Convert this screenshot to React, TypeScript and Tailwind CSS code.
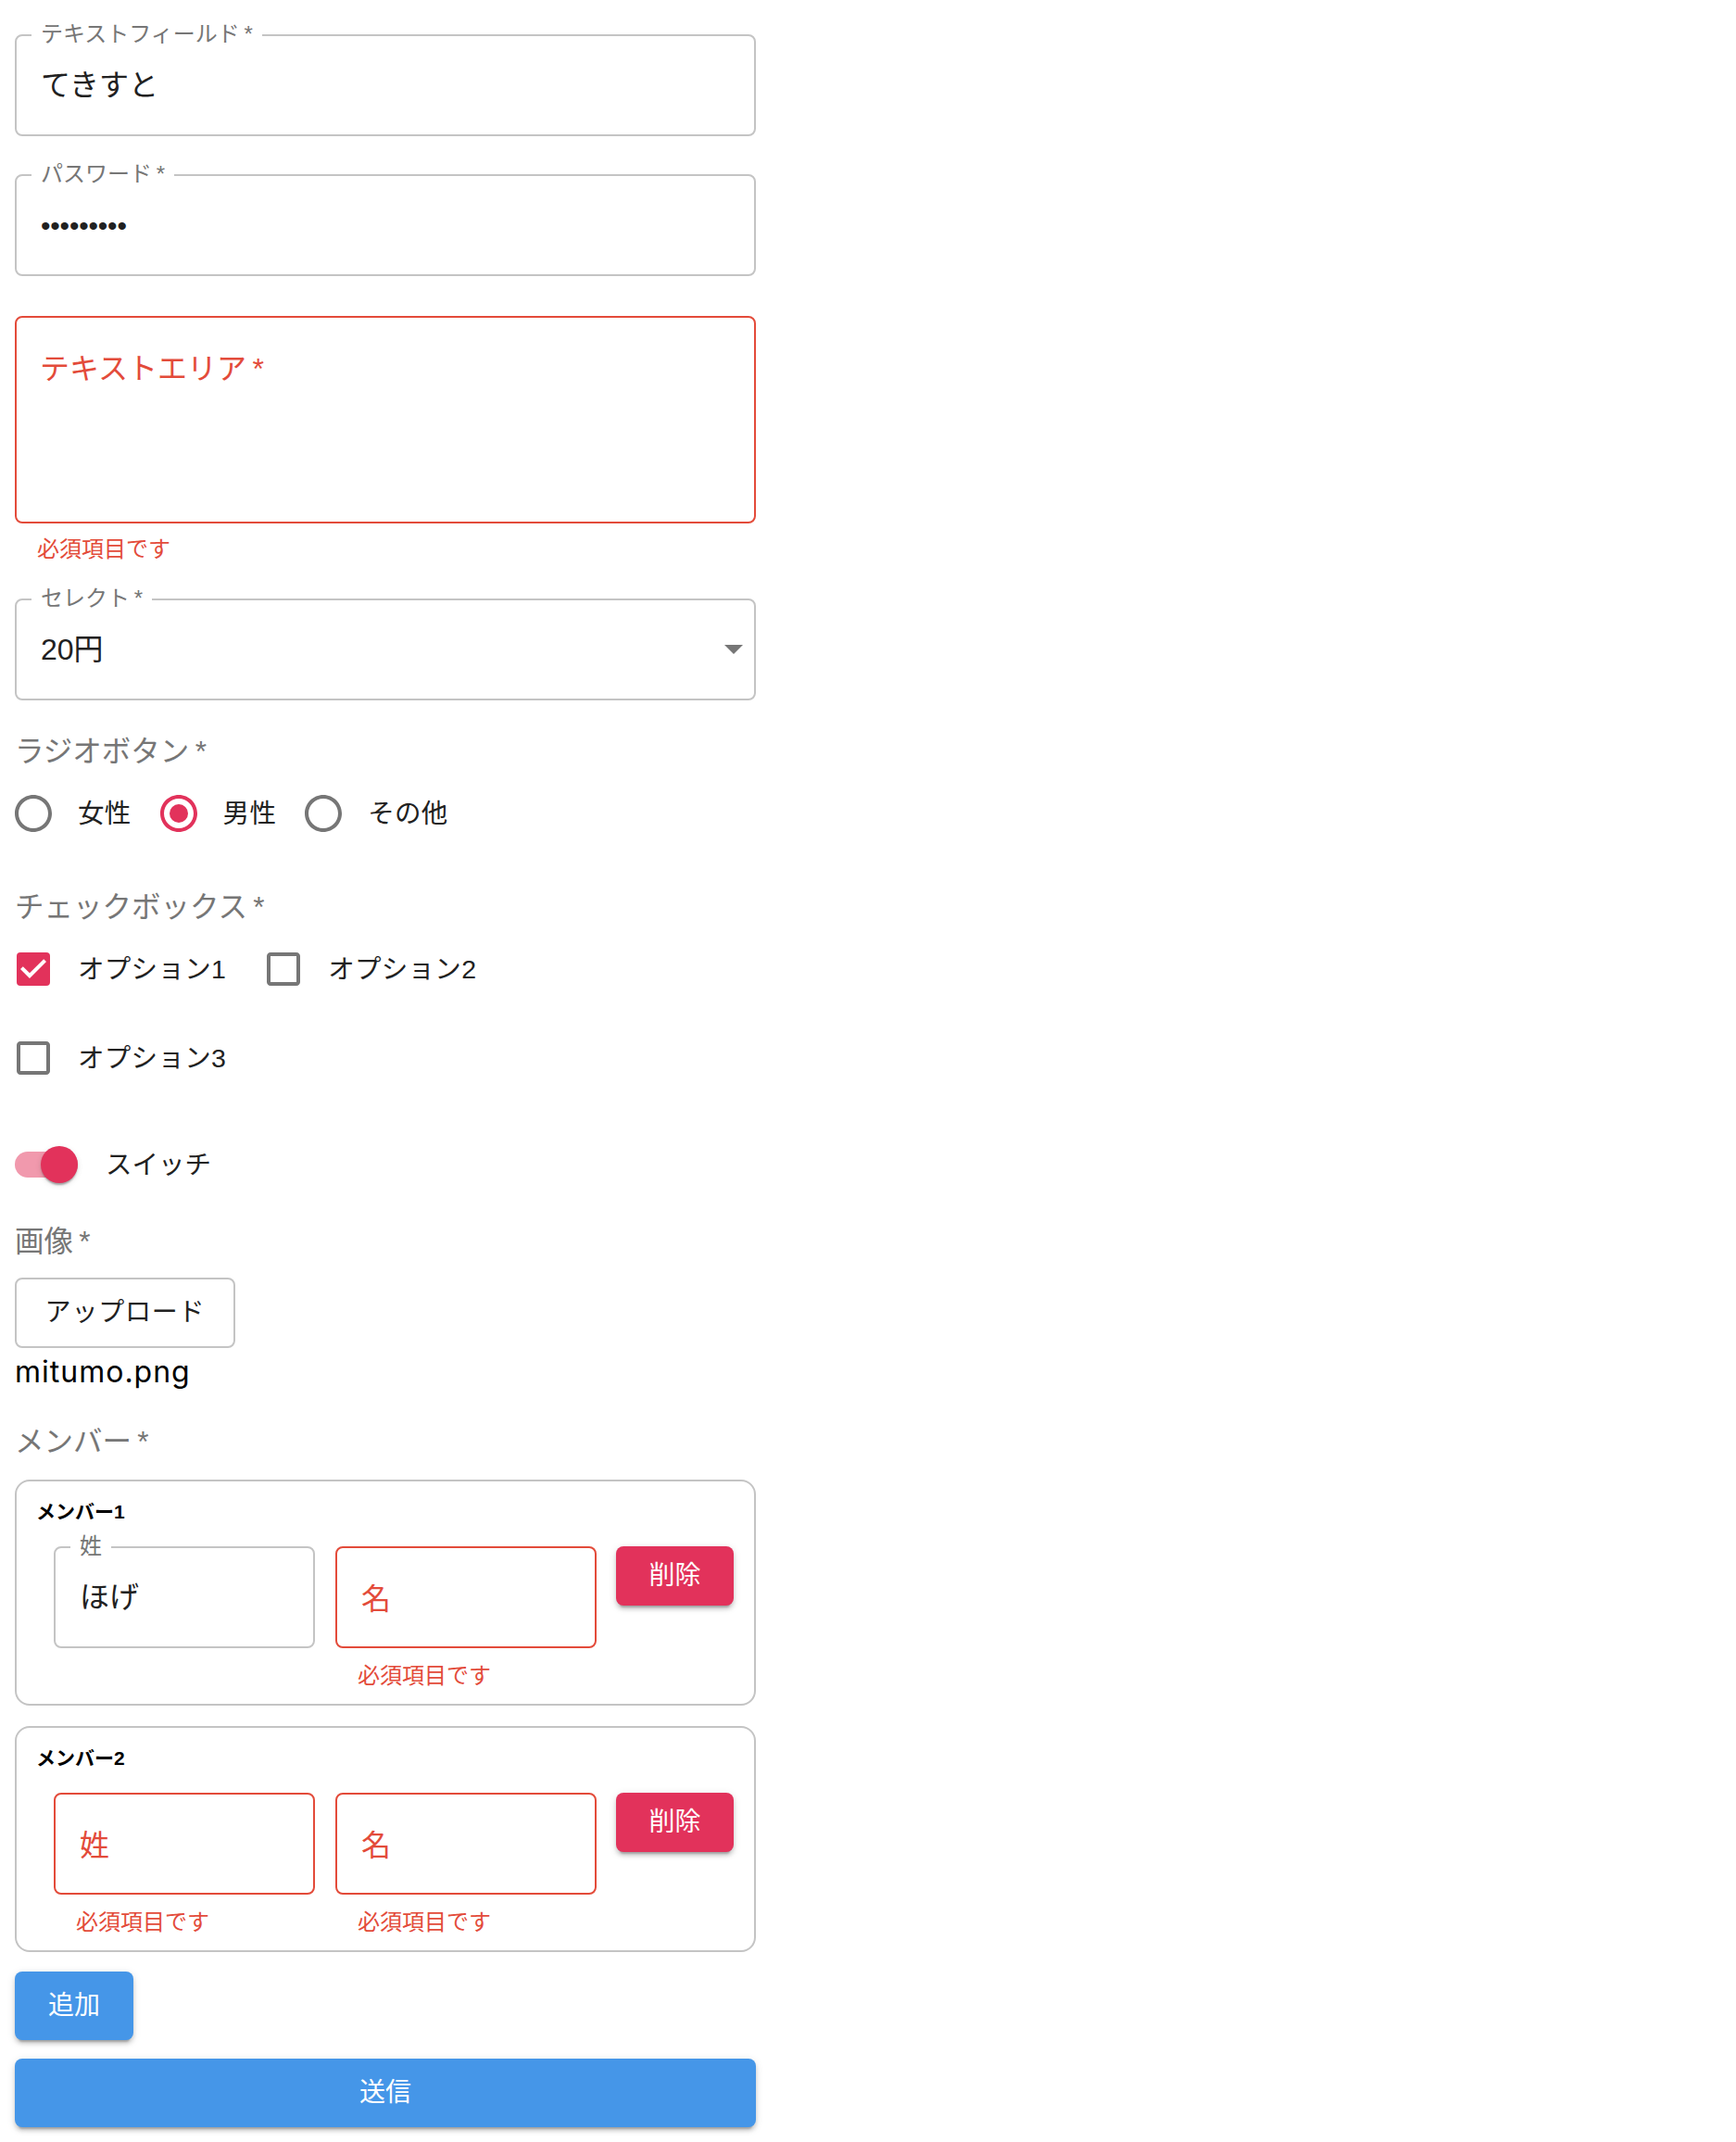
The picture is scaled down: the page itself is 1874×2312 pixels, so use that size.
import React from "react";

const PINK = "#e2325b";

type FieldProps = {
  label: string;
  value?: React.ReactNode;
  error?: boolean;
  className?: string;
};

// Outlined text field: shrunk label sits on the top border when there is a value,
// otherwise the (red) label is shown inside the box.
const OutlinedField = ({ label, value, error, className = "" }: FieldProps) => {
  if (error) {
    return (
      <div className={`h-[110px] rounded-[8px] border-2 border-[#e34b3a] pl-[26px] pt-[32px] ${className}`}>
        <div className="text-[32px] leading-[46px] text-[#e34b3a]">{label}</div>
      </div>
    );
  }
  return (
    <div className={`relative flex h-[110px] items-center rounded-[8px] border-2 border-[#c4c4c4] pl-[26px] ${className}`}>
      <span className="absolute left-[16px] top-[-14px] bg-white px-[10px] text-[24px] leading-[24px] text-[#767676]">
        {label}
      </span>
      <span className="text-[32px] leading-[46px] text-[#212121]">{value}</span>
    </div>
  );
};

const Helper = ({ className = "" }: { className?: string }) => (
  <div className={`ml-[24px] text-[24px] leading-[40px] text-[#e34b3a] ${className}`}>必須項目です</div>
);

const GroupLabel = ({ children, className = "" }: { children: React.ReactNode; className?: string }) => (
  <div className={`text-[31.5px] leading-[46px] text-[#767676] ${className}`}>{children}</div>
);

const RadioIcon = ({ checked }: { checked?: boolean }) => (
  <svg viewBox="0 0 24 24" className="ml-[-4px] h-[48px] w-[48px] shrink-0" fill={checked ? PINK : "#767676"}>
    <path d="M12 2C6.48 2 2 6.48 2 12s4.48 10 10 10 10-4.48 10-10S17.52 2 12 2zm0 18c-4.42 0-8-3.58-8-8s3.58-8 8-8 8 3.58 8 8-3.58 8-8 8z" />
    {checked && <circle cx="12" cy="12" r="5" />}
  </svg>
);

const CheckIcon = ({ checked }: { checked?: boolean }) =>
  checked ? (
    <svg viewBox="0 0 24 24" className="ml-[-4px] h-[48px] w-[48px] shrink-0">
      <rect x="3" y="3" width="18" height="18" rx="2" fill={PINK} />
      <path d="M10 17l-5-5 1.41-1.41L10 14.17l7.59-7.59L19 8l-9 9z" fill="#fff" />
    </svg>
  ) : (
    <svg viewBox="0 0 24 24" className="ml-[-4px] h-[48px] w-[48px] shrink-0" fill="#767676">
      <path d="M19 5v14H5V5h14m0-2H5c-1.1 0-2 .9-2 2v14c0 1.1.9 2 2 2h14c1.1 0 2-.9 2-2V5c0-1.1-.9-2-2-2z" />
    </svg>
  );

const Option = ({ icon, label }: { icon: React.ReactNode; label: string }) => (
  <div className="flex items-center gap-[24px]">
    {icon}
    <span className="text-[28.5px] leading-[46px] tracking-[0.3px] text-[#212121]">{label}</span>
  </div>
);

const raised =
  "shadow-[0_6px_2px_-4px_rgba(0,0,0,0.2),0_4px_4px_0_rgba(0,0,0,0.14),0_2px_10px_0_rgba(0,0,0,0.12)]";

type Member = { title: string; sei?: string };

const MemberCard = ({ member, className = "" }: { member: Member; className?: string }) => (
  <div className={`rounded-[16px] border-2 border-[#c4c4c4] pb-[10px] pl-[21px] pt-[17px] ${className}`}>
    <div className="text-[21px] font-bold leading-[32px] text-black">{member.title}</div>
    <div className="ml-[19px] mt-[21px] flex items-start">
      <div className="w-[282px]">
        {member.sei ? (
          <OutlinedField label="姓" value={member.sei} />
        ) : (
          <>
            <OutlinedField label="姓" error />
            <Helper className="mt-[10px]" />
          </>
        )}
      </div>
      <div className="ml-[22px] w-[282px]">
        <OutlinedField label="名" error />
        <Helper className="mt-[10px]" />
      </div>
      <button
        className={`ml-[21px] flex h-[64px] w-[127px] items-center justify-center rounded-[8px] bg-[#e2325b] text-[28px] text-white ${raised}`}
      >
        削除
      </button>
    </div>
  </div>
);

const members: Member[] = [
  { title: "メンバー1", sei: "ほげ" },
  { title: "メンバー2" },
];

export default function App() {
  return (
    <div className="min-h-[2312px] w-[1874px] bg-white pl-[16px] pt-[37px] font-['Liberation_Sans','Noto_Sans_CJK_JP',sans-serif]">
      <div className="w-[800px]">
        {/* Text inputs */}
        <OutlinedField label={"テキストフィールド\u2009*"} value="てきすと" />
        <OutlinedField
          className="mt-[41px]"
          label={"パスワード\u2009*"}
          value={<span className="text-[30px] tracking-[-0.2px]">•••••••••</span>}
        />
        <div className="mt-[43px] h-[224px] rounded-[8px] border-2 border-[#e34b3a] pl-[25px] pt-[32px]">
          <div className="text-[32px] leading-[46px] text-[#e34b3a]">{"テキストエリア\u2009*"}</div>
        </div>
        <Helper className="mt-[8px]" />

        {/* Select */}
        <div className="relative mt-[33px] flex h-[110px] items-center justify-between rounded-[8px] border-2 border-[#c4c4c4] pl-[26px] pr-[12px]">
          <span className="absolute left-[16px] top-[-14px] bg-white px-[10px] text-[24px] leading-[24px] text-[#767676]">
            {"セレクト\u2009*"}
          </span>
          <span className="text-[32px] leading-[46px] text-[#212121]">20円</span>
          <svg viewBox="0 0 10 5" className="h-[10px] w-[20px]" fill="#767676">
            <path d="M0 0l5 5 5-5z" />
          </svg>
        </div>

        {/* Radio */}
        <GroupLabel className="mt-[32px]">{"ラジオボタン\u2009*"}</GroupLabel>
        <div className="mt-[2px] flex h-[84px] items-center gap-[31px]">
          <Option icon={<RadioIcon />} label="女性" />
          <Option icon={<RadioIcon checked />} label="男性" />
          <Option icon={<RadioIcon />} label="その他" />
        </div>

        {/* Checkbox */}
        <GroupLabel className="mt-[36px]">{"チェックボックス\u2009*"}</GroupLabel>
        <div className="mt-[2px] flex h-[84px] items-center gap-[42px]">
          <Option icon={<CheckIcon checked />} label="オプション1" />
          <Option icon={<CheckIcon />} label="オプション2" />
        </div>
        <div className="mt-[12px] flex h-[84px] items-center">
          <Option icon={<CheckIcon />} label="オプション3" />
        </div>

        {/* Switch */}
        <div className="mt-[35px] flex h-[76px] items-center">
          <div className="relative flex h-[40px] w-[68px] items-center">
            <div className="h-[28px] w-full rounded-full bg-[#f199ad]" />
            <div className="absolute right-0 top-0 h-[40px] w-[40px] rounded-full bg-[#e2325b] shadow-[0_4px_2px_-2px_rgba(0,0,0,0.2),0_2px_2px_0_rgba(0,0,0,0.14),0_2px_6px_0_rgba(0,0,0,0.12)]" />
          </div>
          <span className="ml-[30px] text-[28.5px] leading-[46px] text-[#212121]">スイッチ</span>
        </div>

        {/* Image upload */}
        <GroupLabel className="mt-[22px]">{"画像\u2009*"}</GroupLabel>
        <button className="mt-[16px] flex h-[76px] w-[238px] items-center justify-center rounded-[8px] border-2 border-[#c4c4c4] text-[28px] tracking-[0.8px] text-[#212121]">
          アップロード
        </button>
        <div className="mt-[3px] font-['Inter','Noto_Sans_CJK_JP',sans-serif] text-[32px] leading-[46px] tracking-[1px] text-black">
          mitumo.png
        </div>

        {/* Members */}
        <GroupLabel className="mt-[29px]">{"メンバー\u2009*"}</GroupLabel>
        {members.map((m, i) => (
          <MemberCard key={m.title} member={m} className={i === 0 ? "mt-[18px]" : "mt-[22px]"} />
        ))}

        <button
          className={`mt-[21px] flex h-[74px] w-[128px] items-center justify-center rounded-[8px] bg-[#4596e8] text-[28px] text-white ${raised}`}
        >
          追加
        </button>
        <button
          className={`mt-[20px] flex h-[74px] w-full items-center justify-center rounded-[8px] bg-[#4596e8] text-[28px] text-white ${raised}`}
        >
          送信
        </button>
      </div>
    </div>
  );
}
